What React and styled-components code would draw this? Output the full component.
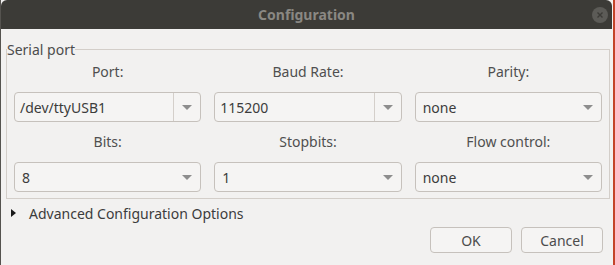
import React from 'react'
import styled, { createGlobalStyle } from 'styled-components'

const GlobalStyle = createGlobalStyle`
  html, body {
    margin: 0;
    padding: 0;
    background: #f2f1f0;
  }
  body {
    font-family: "Noto Sans", "DejaVu Sans", sans-serif;
    font-size: 14px;
    color: #3c3c3c;
  }
`

const Screen = styled.div`
  display: flex;
  width: 615px;
  height: 265px;
  overflow: hidden;
`

const Dialog = styled.div`
  width: 612px;
  display: flex;
  flex-direction: column;
  border-left: 1px solid #55534f;
  background: #f2f1f0;
`

const RedEdge = styled.div`
  width: 2px;
  margin-left: 1px;
  background: #c4442a;
`

const TitleBar = styled.div`
  height: 29px;
  flex: none;
  display: grid;
  grid-template-columns: 1fr auto 1fr;
  align-items: center;
  background: #3c3b37;
  border-radius: 6px 6px 0 0;
`

const Title = styled.div`
  grid-column: 2;
  color: #8a8883;
  font-weight: bold;
  font-size: 14px;
`

const CloseButton = styled.div`
  grid-column: 3;
  justify-self: end;
  margin-right: 4px;
  width: 16px;
  height: 16px;
  border-radius: 50%;
  background: #5c5b57;
  display: flex;
  align-items: center;
  justify-content: center;
`

const Body = styled.div`
  flex: 1;
  display: flex;
  flex-direction: column;
  padding: 12px 2px 0 5px;
`

const Group = styled.fieldset`
  margin: 0;
  padding: 0 7px 6px 7px;
  border: 1px solid #d3cec9;
  border-radius: 0;
`

const Legend = styled.legend`
  padding: 0;
  margin-left: -7px;
  line-height: 17px;
  color: #4c4c4c;
`

const Grid = styled.div`
  display: grid;
  grid-template-columns: repeat(3, 1fr);
  column-gap: 13px;
  row-gap: 10px;
  padding-top: 4px;
`

const Label = styled.div`
  height: 20px;
  line-height: 20px;
  text-align: center;
  color: #4f4f4f;
`

const Select = styled.div`
  height: 28px;
  display: flex;
  align-items: center;
  border: 1px solid #c6c1bc;
  border-radius: 4px;
  background: #f5f4f3;
`

const Value = styled.div`
  flex: 1;
  padding-left: ${({ entry }) => (entry ? '5px' : '7px')};
  color: #3c3c3c;
`

const ArrowBox = styled.div`
  width: 26px;
  height: 100%;
  display: flex;
  align-items: center;
  justify-content: center;
  border-left: ${({ entry }) => (entry ? '1px solid #d4cfca' : 'none')};
`

const Arrow = styled.div`
  width: 0;
  height: 0;
  border-left: 5px solid transparent;
  border-right: 5px solid transparent;
  border-top: 5px solid #8d8d8d;
`

const Expander = styled.div`
  display: flex;
  align-items: center;
  height: 18px;
  margin-top: 5px;
  color: #3c3c3c;
`

const ExpanderArrow = styled.div`
  width: 0;
  height: 0;
  margin: 0 13px 0 5px;
  border-top: 4px solid transparent;
  border-bottom: 4px solid transparent;
  border-left: 5px solid #1a1a1a;
`

const ButtonRow = styled.div`
  display: flex;
  justify-content: flex-end;
  gap: 9px;
  margin-top: 5px;
  padding-right: 7px;
`

const Button = styled.div`
  width: 80px;
  height: 24px;
  display: flex;
  align-items: center;
  justify-content: center;
  border: 1px solid #c6c1bc;
  border-radius: 4px;
  background: #f5f4f3;
  color: #4c4c4c;
`

const fields = [
  { label: 'Port:', value: '/dev/ttyUSB1', entry: true },
  { label: 'Baud Rate:', value: '115200', entry: true },
  { label: 'Parity:', value: 'none' },
  { label: 'Bits:', value: '8' },
  { label: 'Stopbits:', value: '1' },
  { label: 'Flow control:', value: 'none' },
]

function Combo({ value, entry }) {
  return (
    <Select>
      <Value entry={entry}>{value}</Value>
      <ArrowBox entry={entry}>
        <Arrow />
      </ArrowBox>
    </Select>
  )
}

export default function App() {
  const rows = [fields.slice(0, 3), fields.slice(3, 6)]

  return (
    <Screen>
      <GlobalStyle />
      <Dialog>
        <TitleBar>
          <Title>Configuration</Title>
          <CloseButton>
            <svg width="8" height="8" viewBox="0 0 8 8">
              <path d="M1.5 1.5 L6.5 6.5 M6.5 1.5 L1.5 6.5" stroke="#3c3b37" strokeWidth="1.4" />
            </svg>
          </CloseButton>
        </TitleBar>

        <Body>
          <Group>
            <Legend>Serial port</Legend>
            <Grid>
              {rows.map(row => (
                <React.Fragment key={row[0].label}>
                  {row.map(f => <Label key={f.label}>{f.label}</Label>)}
                  {row.map(f => <Combo key={f.label + 'c'} value={f.value} entry={f.entry} />)}
                </React.Fragment>
              ))}
            </Grid>
          </Group>

          <Expander>
            <ExpanderArrow />
            Advanced Configuration Options
          </Expander>

          <ButtonRow>
            <Button>OK</Button>
            <Button>Cancel</Button>
          </ButtonRow>
        </Body>
      </Dialog>
      <RedEdge />
    </Screen>
  )
}
